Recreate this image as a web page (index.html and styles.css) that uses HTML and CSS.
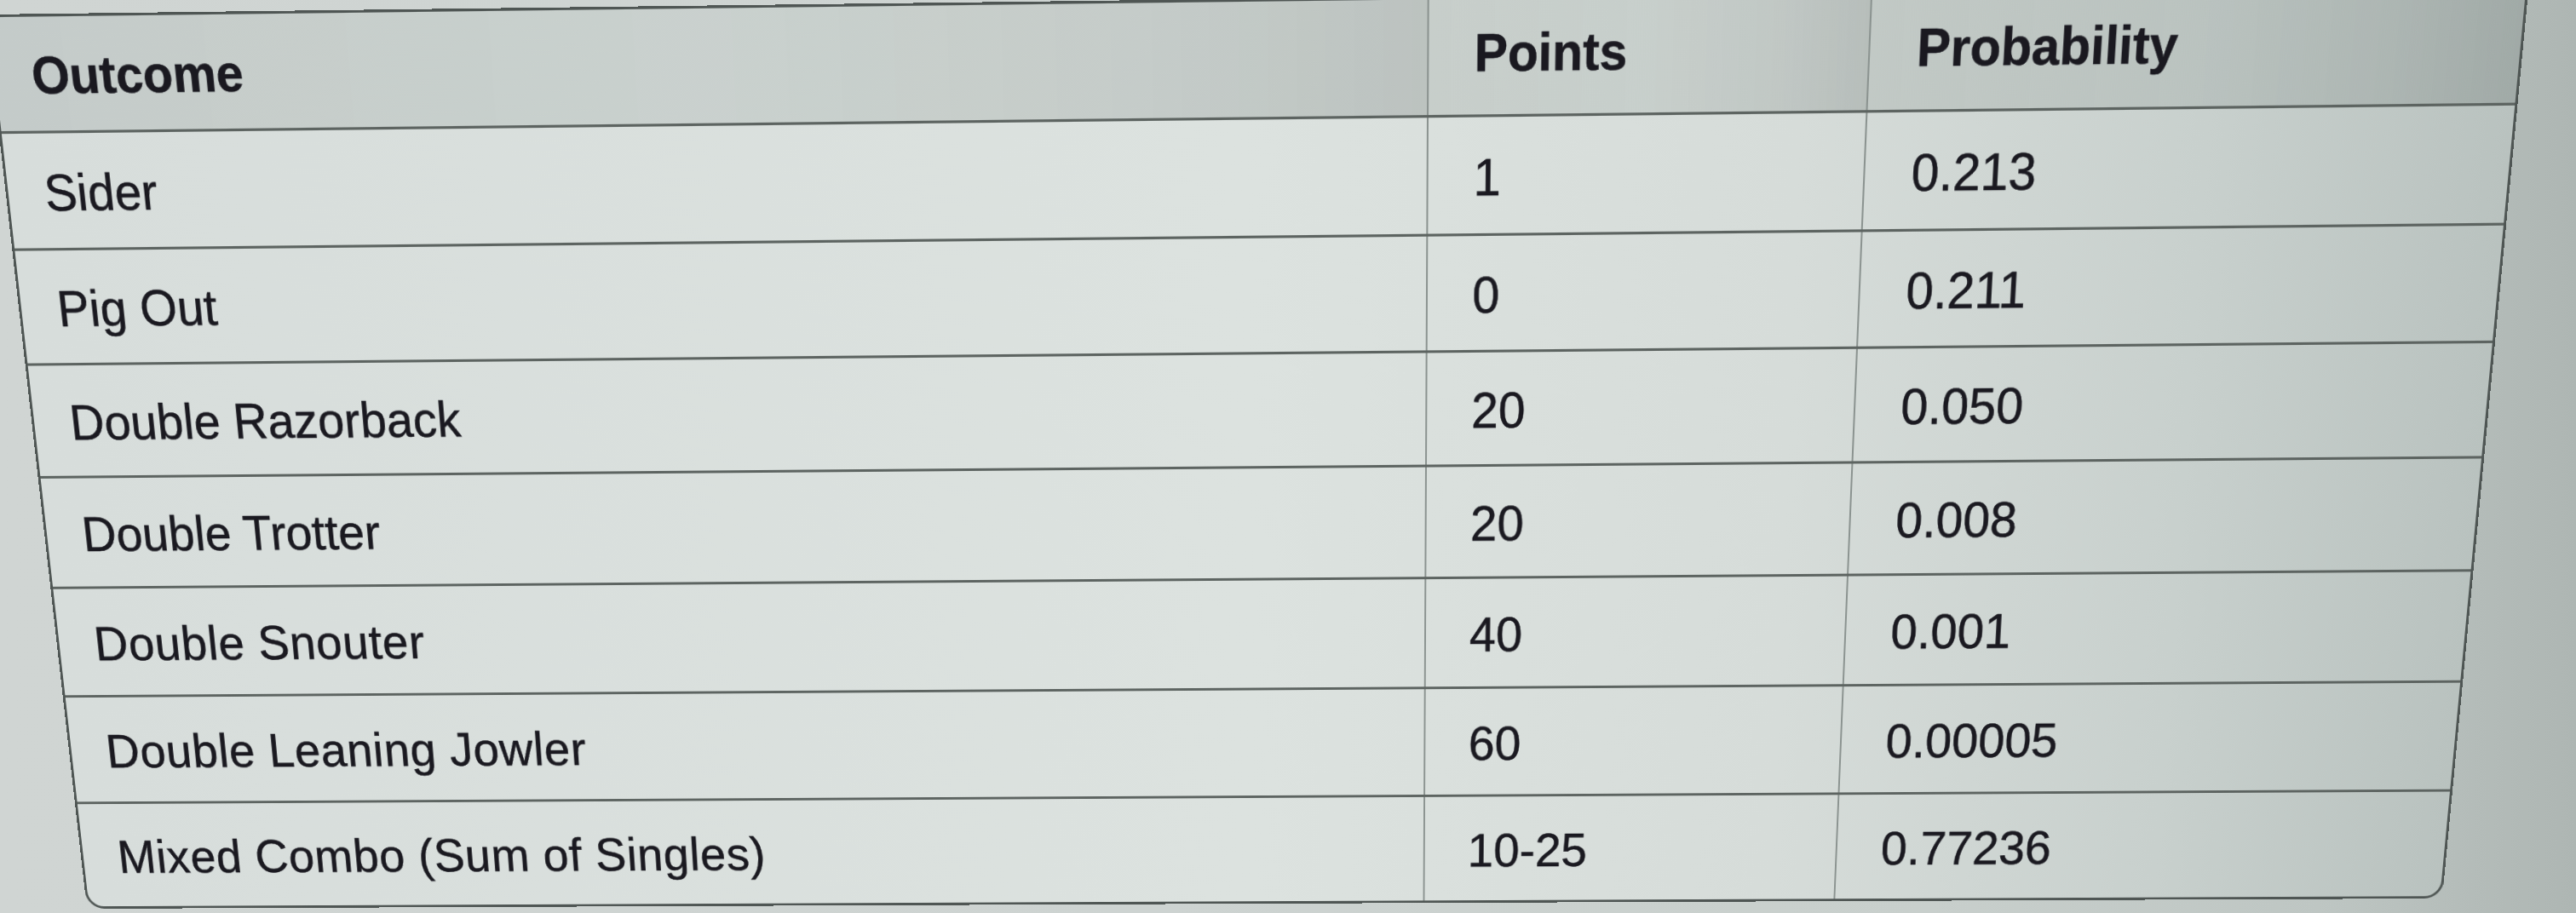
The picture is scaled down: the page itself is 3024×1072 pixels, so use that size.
FILE: index.html
```html
<!DOCTYPE html>
<html lang="en">
<head>
<meta charset="utf-8">
<title>Pig Outcomes</title>
<link rel="stylesheet" href="styles.css">
</head>
<body>
  <div class="sheet">
    <table class="odds">
      <colgroup>
        <col class="w-outcome">
        <col class="w-points">
        <col class="w-prob">
      </colgroup>
      <thead>
        <tr>
          <th class="c-outcome">Outcome</th>
          <th class="c-points">Points</th>
          <th class="c-prob">Probability</th>
        </tr>
      </thead>
      <tbody>
        <tr><td class="c-outcome">Sider</td><td class="c-points">1</td><td class="c-prob">0.213</td></tr>
        <tr><td class="c-outcome">Pig Out</td><td class="c-points">0</td><td class="c-prob">0.211</td></tr>
        <tr><td class="c-outcome">Double Razorback</td><td class="c-points">20</td><td class="c-prob">0.050</td></tr>
        <tr><td class="c-outcome">Double Trotter</td><td class="c-points">20</td><td class="c-prob">0.008</td></tr>
        <tr><td class="c-outcome">Double Snouter</td><td class="c-points">40</td><td class="c-prob">0.001</td></tr>
        <tr><td class="c-outcome">Double Leaning Jowler</td><td class="c-points">60</td><td class="c-prob">0.00005</td></tr>
        <tr><td class="c-outcome">Mixed Combo (Sum of Singles)</td><td class="c-points">10-25</td><td class="c-prob">0.77236</td></tr>
      </tbody>
    </table>
  </div>
</body>
</html>
```

FILE: styles.css
```css
html, body {
  margin: 0;
  padding: 0;
  width: 3024px;
  height: 1072px;
  overflow: hidden;
}

body {
  background: linear-gradient(to right, #d0d5d3 0%, #cdd3d1 45%, #c8cfcc 75%, #bec6c3 90%, #b4bcb9 96%, #aeb6b3 100%);
  font-family: "Liberation Sans", Arial, "Helvetica Neue", sans-serif;
  color: #1a1920;
}

/* The table is laid out flat, then projected to match the photographed screen */
.sheet {
  box-sizing: border-box;
  width: 2900px;
  height: 1048px;
  border: 3px solid #4f5654;
  border-radius: 0 0 22px 22px;
  overflow: hidden;
  background: linear-gradient(to right, #d7dddb 0%, #dce2df 50%, #d6dcd9 72%, #c8d0cd 88%, #b9c2bf 100%);
  transform-origin: 0 0;
  transform: matrix3d(1.006748, -0.012603, 0, -0.0000077148,
                      0.121250, 1.082443, 0, 0.0000754790,
                      0, 0, 1, 0,
                      -17, 17, 0, 1);
}

.odds {
  width: 100%;
  border-collapse: collapse;
  table-layout: fixed;
  font-size: 57px;
  -webkit-text-stroke: 0.5px #1a1920;
}

.w-outcome { width: 1658px; }
.w-points { width: 502px; }
.w-prob { width: auto; }

.odds tr {
  height: 131px;
}

.odds thead tr {
  height: 126px;
}

.odds th,
.odds td {
  padding: 4px 0 0 0;
  text-align: left;
  vertical-align: middle;
  white-space: nowrap;
  border-bottom: 3px solid #5d6461;
}

.odds tbody tr:last-child td {
  border-bottom: none;
}

.odds thead th {
  font-weight: bold;
  background: linear-gradient(to right, rgba(70, 85, 80, 0.13) 0%, rgba(70, 85, 80, 0.11) 50%, rgba(60, 72, 68, 0.14) 80%, rgba(50, 60, 57, 0.18) 100%);
}

.odds thead th.c-points,
.odds thead th.c-prob {
  padding-bottom: 12px;
}

.odds td {
  font-weight: normal;
}

.odds tbody tr:nth-child(n+5) td.c-outcome {
  letter-spacing: 0.6px;
}

.c-outcome {
  padding-left: 43px !important;
}

.c-points,
.c-prob {
  border-left: 2px solid #8b9390;
}

.c-points {
  padding-left: 52px !important;
}

.c-prob {
  padding-left: 53px !important;
}
```
